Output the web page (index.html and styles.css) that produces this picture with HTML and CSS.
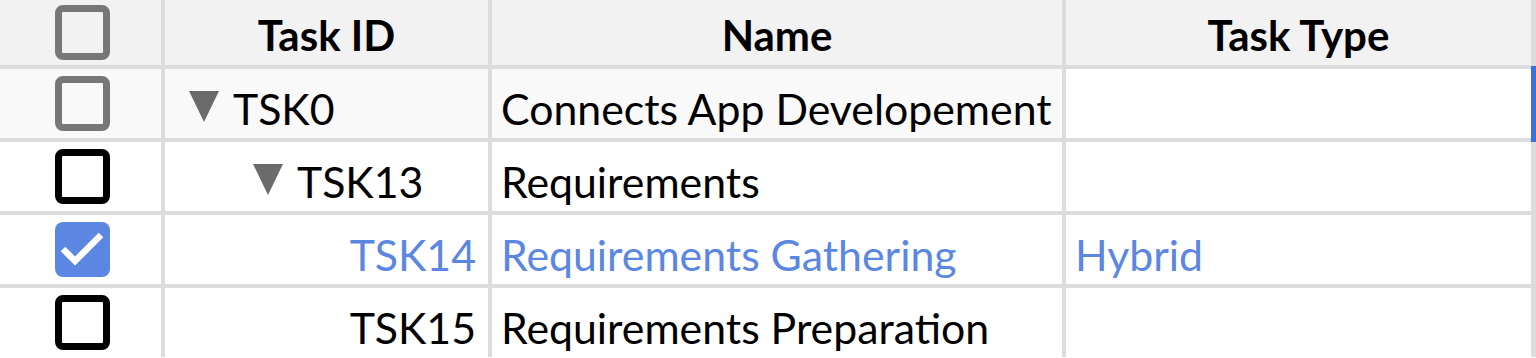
FILE: index.html
```html
<!DOCTYPE html>
<html lang="en">
<head>
    <meta charset="UTF-8">
    <title>Task Grid</title>
    <link rel="stylesheet" href="styles.css">
</head>
<body>
    <div class="grid">
        <!-- header -->
        <div class="cell head check-cell"><span class="checkbox disabled"></span></div>
        <div class="cell head">Task ID</div>
        <div class="cell head">Name</div>
        <div class="cell head last">Task Type</div>

        <!-- TSK0 -->
        <div class="cell muted check-cell"><span class="checkbox disabled"></span></div>
        <div class="cell muted text level-0">
            <svg class="toggle" viewBox="0 0 30 31"><polygon points="0,0 30,0 15,31"/></svg>
            TSK0
        </div>
        <div class="cell muted text name">Connects App Developement</div>
        <div class="cell text last active"></div>

        <!-- TSK13 -->
        <div class="cell check-cell"><span class="checkbox"></span></div>
        <div class="cell text level-1">
            <svg class="toggle" viewBox="0 0 30 31"><polygon points="0,0 30,0 15,31"/></svg>
            TSK13
        </div>
        <div class="cell text name">Requirements</div>
        <div class="cell text last"></div>

        <!-- TSK14 -->
        <div class="cell check-cell">
            <span class="checkbox checked">
                <svg viewBox="0 0 55 55"><polyline points="8,27 20,39 46,13"/></svg>
            </span>
        </div>
        <div class="cell text leaf selected">TSK14</div>
        <div class="cell text name selected">Requirements Gathering</div>
        <div class="cell text name last selected">Hybrid</div>

        <!-- TSK15 -->
        <div class="cell check-cell"><span class="checkbox"></span></div>
        <div class="cell text leaf">TSK15</div>
        <div class="cell text name">Requirements Preparation</div>
        <div class="cell text last"></div>
    </div>
</body>
</html>
```

FILE: styles.css
```css
body {
    margin: 0;
    font-family: Lato, "Open Sans", sans-serif;
    font-size: 42px;
    color: #000;
    background: #fff;
    overflow: hidden;
}

.grid {
    display: grid;
    grid-template-columns: 161px 323px 570px 470px;
    grid-template-rows: 65px repeat(4, 69px);
    gap: 4px;
    width: 1536px;
    background: #dcdcdc;
}

.cell {
    display: flex;
    align-items: center;
    background: #fff;
    white-space: nowrap;
    box-sizing: border-box;
}

.cell.last {
    border-right: 5px solid #dcdcdc;
}

.cell.head {
    background: #f2f2f2;
    font-weight: bold;
    justify-content: center;
    padding-top: 4px;
}

.cell.head.check-cell {
    padding-top: 0;
}

.cell.muted {
    background: #f9f9f9;
}

.cell.text {
    font-size: 42.8px;
    padding-top: 9px;
}

.check-cell {
    justify-content: center;
    padding-left: 3px;
}

.checkbox {
    display: block;
    width: 55px;
    height: 55px;
    box-sizing: border-box;
    border: 7px solid #000;
    border-radius: 8px;
}

.checkbox.disabled {
    border-color: #777;
}

.checkbox.checked {
    border: none;
    background: #5b87e2;
}

.checkbox.checked svg {
    display: block;
    width: 55px;
    height: 55px;
}

.checkbox.checked polyline {
    fill: none;
    stroke: #fff;
    stroke-width: 6.5;
}

.toggle {
    width: 30px;
    height: 31px;
    margin-right: 14px;
    margin-top: -4px;
    fill: #6b6b6b;
    flex-shrink: 0;
}

.level-0 {
    padding-left: 24px;
}

.level-1 {
    padding-left: 88px;
}

.leaf {
    justify-content: flex-end;
    padding-right: 12px;
}

.name {
    padding-left: 9px;
}

.selected {
    color: #5b87e2;
}

.active {
    position: relative;
}

.active::after {
    content: "";
    position: absolute;
    right: -5px;
    top: -3px;
    bottom: -4px;
    width: 5px;
    background: #3b6fdc;
}
```
